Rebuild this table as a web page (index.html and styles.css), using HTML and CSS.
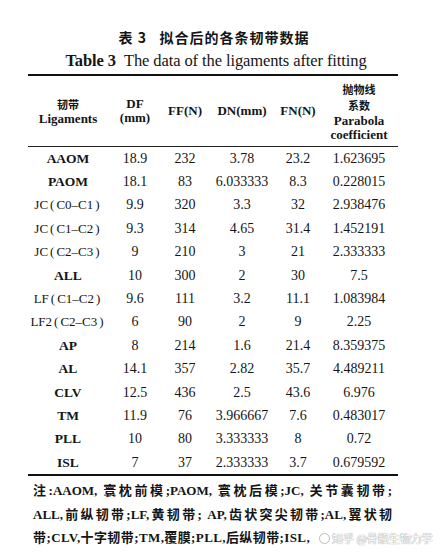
FILE: index.html
```html
<!DOCTYPE html>
<html lang="zh">
<head>
<meta charset="utf-8">
<link rel="stylesheet" href="styles.css">
</head>
<body>
<div class="page">
  <div class="title-cn">表 3&nbsp;&nbsp;&nbsp;拟合后的各条韧带数据</div>
  <div class="title-en"><b>Table 3</b>&nbsp;&nbsp;The data of the ligaments after fitting</div>

  <div class="table">
    <div class="row head">
      <div class="cell"><span class="cn">韧带</span><span>Ligaments</span></div>
      <div class="cell"><span>DF</span><span>(mm)</span></div>
      <div class="cell"><span>FF(N)</span></div>
      <div class="cell"><span>DN(mm)</span></div>
      <div class="cell"><span>FN(N)</span></div>
      <div class="cell"><span class="cn">抛物线<br>系数</span><span class="thin">Parabola<br>coefficient</span></div>
    </div>
    <div class="body">
      <div class="row"><div class="cell name">AAOM</div><div class="cell">18.9</div><div class="cell">232</div><div class="cell">3.78</div><div class="cell">23.2</div><div class="cell">1.623695</div></div>
      <div class="row"><div class="cell name">PAOM</div><div class="cell">18.1</div><div class="cell">83</div><div class="cell">6.033333</div><div class="cell">8.3</div><div class="cell">0.228015</div></div>
      <div class="row"><div class="cell name light">JC<i>(</i>C0–C1<i>)</i></div><div class="cell">9.9</div><div class="cell">320</div><div class="cell">3.3</div><div class="cell">32</div><div class="cell">2.938476</div></div>
      <div class="row"><div class="cell name light">JC<i>(</i>C1–C2<i>)</i></div><div class="cell">9.3</div><div class="cell">314</div><div class="cell">4.65</div><div class="cell">31.4</div><div class="cell">1.452191</div></div>
      <div class="row"><div class="cell name light">JC<i>(</i>C2–C3<i>)</i></div><div class="cell">9</div><div class="cell">210</div><div class="cell">3</div><div class="cell">21</div><div class="cell">2.333333</div></div>
      <div class="row"><div class="cell name">ALL</div><div class="cell">10</div><div class="cell">300</div><div class="cell">2</div><div class="cell">30</div><div class="cell">7.5</div></div>
      <div class="row"><div class="cell name light">LF<i>(</i>C1–C2<i>)</i></div><div class="cell">9.6</div><div class="cell">111</div><div class="cell">3.2</div><div class="cell">11.1</div><div class="cell">1.083984</div></div>
      <div class="row"><div class="cell name light">LF2<i>(</i>C2–C3<i>)</i></div><div class="cell">6</div><div class="cell">90</div><div class="cell">2</div><div class="cell">9</div><div class="cell">2.25</div></div>
      <div class="row"><div class="cell name">AP</div><div class="cell">8</div><div class="cell">214</div><div class="cell">1.6</div><div class="cell">21.4</div><div class="cell">8.359375</div></div>
      <div class="row"><div class="cell name">AL</div><div class="cell">14.1</div><div class="cell">357</div><div class="cell">2.82</div><div class="cell">35.7</div><div class="cell">4.489211</div></div>
      <div class="row"><div class="cell name">CLV</div><div class="cell">12.5</div><div class="cell">436</div><div class="cell">2.5</div><div class="cell">43.6</div><div class="cell">6.976</div></div>
      <div class="row"><div class="cell name">TM</div><div class="cell">11.9</div><div class="cell">76</div><div class="cell">3.966667</div><div class="cell">7.6</div><div class="cell">0.483017</div></div>
      <div class="row"><div class="cell name">PLL</div><div class="cell">10</div><div class="cell">80</div><div class="cell">3.333333</div><div class="cell">8</div><div class="cell">0.72</div></div>
      <div class="row"><div class="cell name">ISL</div><div class="cell">7</div><div class="cell">37</div><div class="cell">2.333333</div><div class="cell">3.7</div><div class="cell">0.679592</div></div>
    </div>
  </div>

  <div class="note">
    <div class="line just">注:AAOM, 寰枕前模;PAOM, 寰枕后模;JC, 关节囊韧带;</div>
    <div class="line just">ALL,前纵韧带;LF,黄韧带; AP,齿状突尖韧带;AL,翼状韧</div>
    <div class="line wide">带;CLV,十字韧带;TM,覆膜;PLL,后纵韧带;ISL,</div>
    <div class="watermark"><span class="wm-icon"></span>知乎 @骨骼生物力学</div>
  </div>
</div>
</body>
</html>
```
FILE: styles.css
```css
html, body {
  margin: 0;
  padding: 0;
  background: #fff;
}
body {
  width: 440px;
  height: 552px;
  overflow: hidden;
  color: #151515;
  font-family: "Liberation Serif", "Noto Sans CJK SC", serif;
}
.page {
  position: relative;
  padding-top: 28px;
}
.title-cn {
  text-align: center;
  font-family: "Noto Sans CJK SC", sans-serif;
  font-weight: 700;
  font-size: 14px;
  line-height: 18px;
  letter-spacing: 1px;
  padding-right: 12px;
}
.title-en {
  text-align: center;
  font-size: 16.5px;
  line-height: 20px;
  margin-top: 5px;
  letter-spacing: -0.1px;
  padding-right: 8px;
}
.table {
  margin: 3px 0 0 28px;
  width: 370px;
  border-top: 2px solid #111;
  border-bottom: 2px solid #111;
}
.row {
  display: grid;
  grid-template-columns: 80px 54px 46px 68px 44px 78px;
  height: 23.4px;
  align-items: center;
  font-size: 14px;
}
.cell {
  text-align: center;
  white-space: nowrap;
}
.head {
  height: 70px;
  border-bottom: 1.5px solid #222;
  font-weight: 700;
  font-size: 13px;
  line-height: 14px;
}
.head .cell {
  display: flex;
  flex-direction: column;
  align-items: center;
  justify-content: center;
}
.head .cn {
  font-family: "Noto Sans CJK SC", sans-serif;
  font-size: 11px;
  line-height: 16px;
}
.head .cell:first-child .cn {
  margin-bottom: 0;
}
.head .cell:last-child .cn + .thin {
  margin-top: 1px;
}
.head .thin {
  font-weight: 600;
}
.name {
  font-weight: 700;
  font-size: 13.5px;
}
.name.light {
  font-weight: 400;
  font-size: 13px;
}
.name i {
  font-style: normal;
  margin: 0 2px;
}
.note {
  position: relative;
  margin: 3px 0 0 33px;
  width: 359px;
  font-family: "Liberation Serif", "Noto Sans CJK SC", serif;
  font-weight: 700;
  font-size: 13px;
  line-height: 23.5px;
}
.line {
  white-space: nowrap;
}
.line.just {
  text-align: justify;
  text-align-last: justify;
}
.line.wide {
  letter-spacing: 0.4px;
}
.watermark {
  position: absolute;
  left: 286px;
  top: 52px;
  font-family: "Noto Sans CJK SC", sans-serif;
  font-weight: 400;
  font-size: 11px;
  line-height: 14px;
  color: #fff;
  white-space: nowrap;
  text-shadow: 0 0 1px #999, 0 0 1px #999;
  display: flex;
  align-items: center;
  gap: 2px;
}
.wm-icon {
  width: 9px;
  height: 9px;
  border: 1.5px solid #bbb;
  border-radius: 50%;
  background: #fff;
}
```
